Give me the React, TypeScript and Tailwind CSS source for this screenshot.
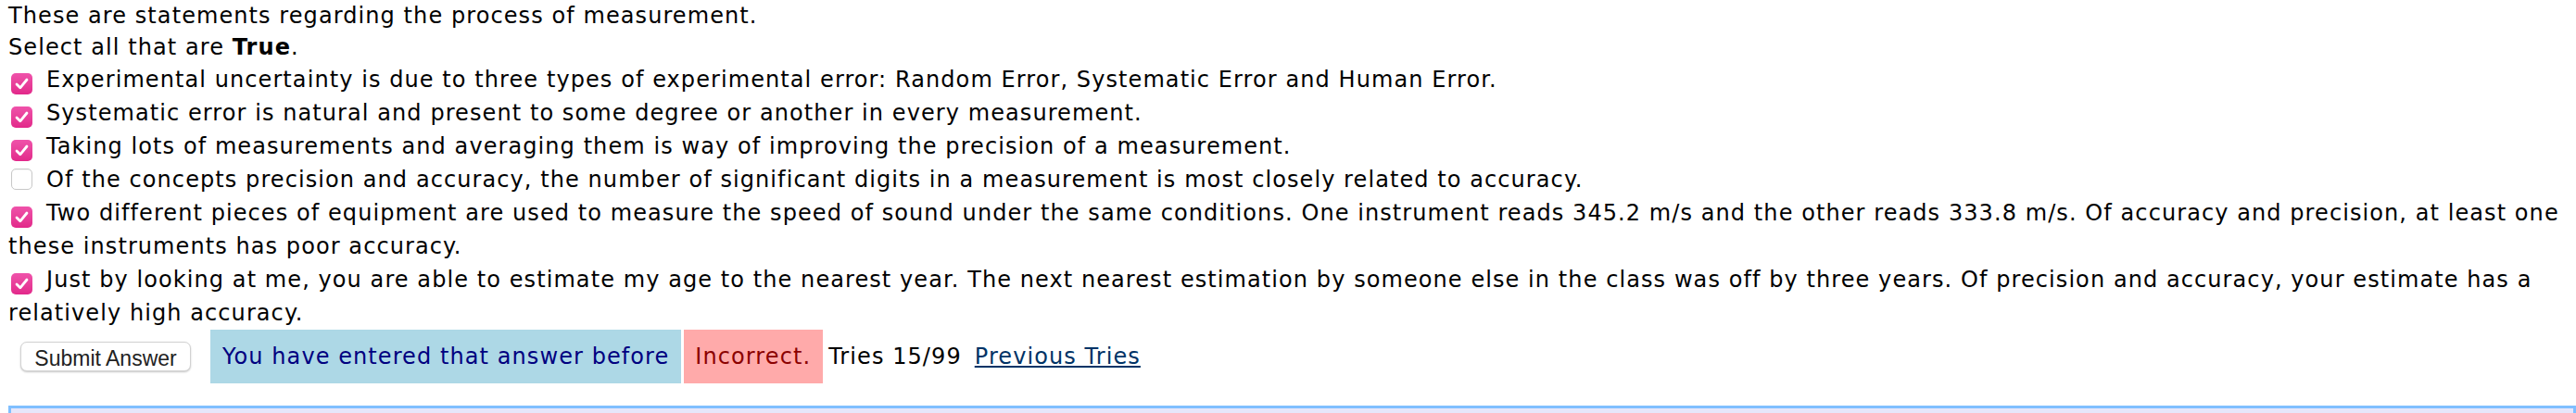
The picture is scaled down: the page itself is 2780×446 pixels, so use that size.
import React from "react";

interface OptionProps {
  checked: boolean;
  lines: string[];
}

function Box({ checked }: { checked: boolean }) {
  if (!checked) {
    return (
      <span className="inline-block w-[23px] h-[23px] ml-[3px] mr-[15px] align-[-3px] rounded-[5px] border border-[#c8c8c8] bg-white shadow-[inset_0_1px_1px_rgba(0,0,0,0.05)]" />
    );
  }
  return (
    <span className="inline-flex items-center justify-center w-[23px] h-[23px] ml-[3px] mr-[15px] align-[-3px] rounded-[5px] bg-linear-to-b from-[#ef52aa] to-[#e2288a]">
      <svg width="15" height="13" viewBox="0 0 15 13" fill="none">
        <path
          d="M2 7 L5.8 10.8 L13 2"
          stroke="white"
          strokeWidth="2.8"
          strokeLinecap="round"
          strokeLinejoin="round"
        />
      </svg>
    </span>
  );
}

function Option({ checked, lines }: OptionProps) {
  return (
    <div className="leading-[36px] whitespace-nowrap">
      <Box checked={checked} />
      {lines.map((l, i) => (
        <React.Fragment key={i}>
          {i > 0 && <br />}
          {l}
        </React.Fragment>
      ))}
    </div>
  );
}

const options: OptionProps[] = [
  {
    checked: true,
    lines: [
      "Experimental uncertainty is due to three types of experimental error: Random Error, Systematic Error and Human Error.",
    ],
  },
  {
    checked: true,
    lines: [
      "Systematic error is natural and present to some degree or another in every measurement.",
    ],
  },
  {
    checked: true,
    lines: [
      "Taking lots of measurements and averaging them is way of improving the precision of a measurement.",
    ],
  },
  {
    checked: false,
    lines: [
      "Of the concepts precision and accuracy, the number of significant digits in a measurement is most closely related to accuracy.",
    ],
  },
  {
    checked: true,
    lines: [
      "Two different pieces of equipment are used to measure the speed of sound under the same conditions. One instrument reads 345.2 m/s and the other reads 333.8 m/s. Of accuracy and precision, at least one",
      "these instruments has poor accuracy.",
    ],
  },
  {
    checked: true,
    lines: [
      "Just by looking at me, you are able to estimate my age to the nearest year. The next nearest estimation by someone else in the class was off by three years. Of precision and accuracy, your estimate has a",
      "relatively high accuracy.",
    ],
  },
];

export default function App() {
  return (
    <div className="w-[2780px] h-[446px] overflow-hidden bg-white pl-[9px] text-black text-[24px] tracking-[1.08px] font-['Verdana','DejaVu_Sans',sans-serif]">
      {/* question */}
      <div className="leading-[34px]">
        These are statements regarding the process of measurement.
        <br />
        Select all that are <b>True</b>.
      </div>

      {options.map((o, i) => (
        <Option key={i} checked={o.checked} lines={o.lines} />
      ))}

      {/* submit row */}
      <div className="flex items-center h-[58px] whitespace-nowrap">
        <button className="ml-[13px] mr-[21px] w-[184px] h-[32px] rounded-[7px] border border-[#d2d2d2] bg-white text-[#222] text-[23px] tracking-normal font-['Liberation_Sans',Arial,sans-serif] shadow-[0_1px_2px_rgba(0,0,0,0.22)]">
          Submit Answer
        </button>
        <span className="flex items-center h-[58px] px-[13px] bg-[#add8e6] text-[#000080]">
          You have entered that answer before
        </span>
        <span className="flex items-center h-[58px] ml-[3px] pl-[12px] pr-[13px] bg-[#ffaaaa] text-[#8b0000]">
          Incorrect.
        </span>
        <span className="ml-[6px]">Tries 15/99</span>
        <a href="#" className="ml-[14px] text-[#003366] underline">
          Previous Tries
        </a>
      </div>

      {/* feedback box */}
      <div className="mt-[24px] h-[40px] border-[3px] border-[#80bfff] bg-[#e6e6fa]" />
    </div>
  );
}
